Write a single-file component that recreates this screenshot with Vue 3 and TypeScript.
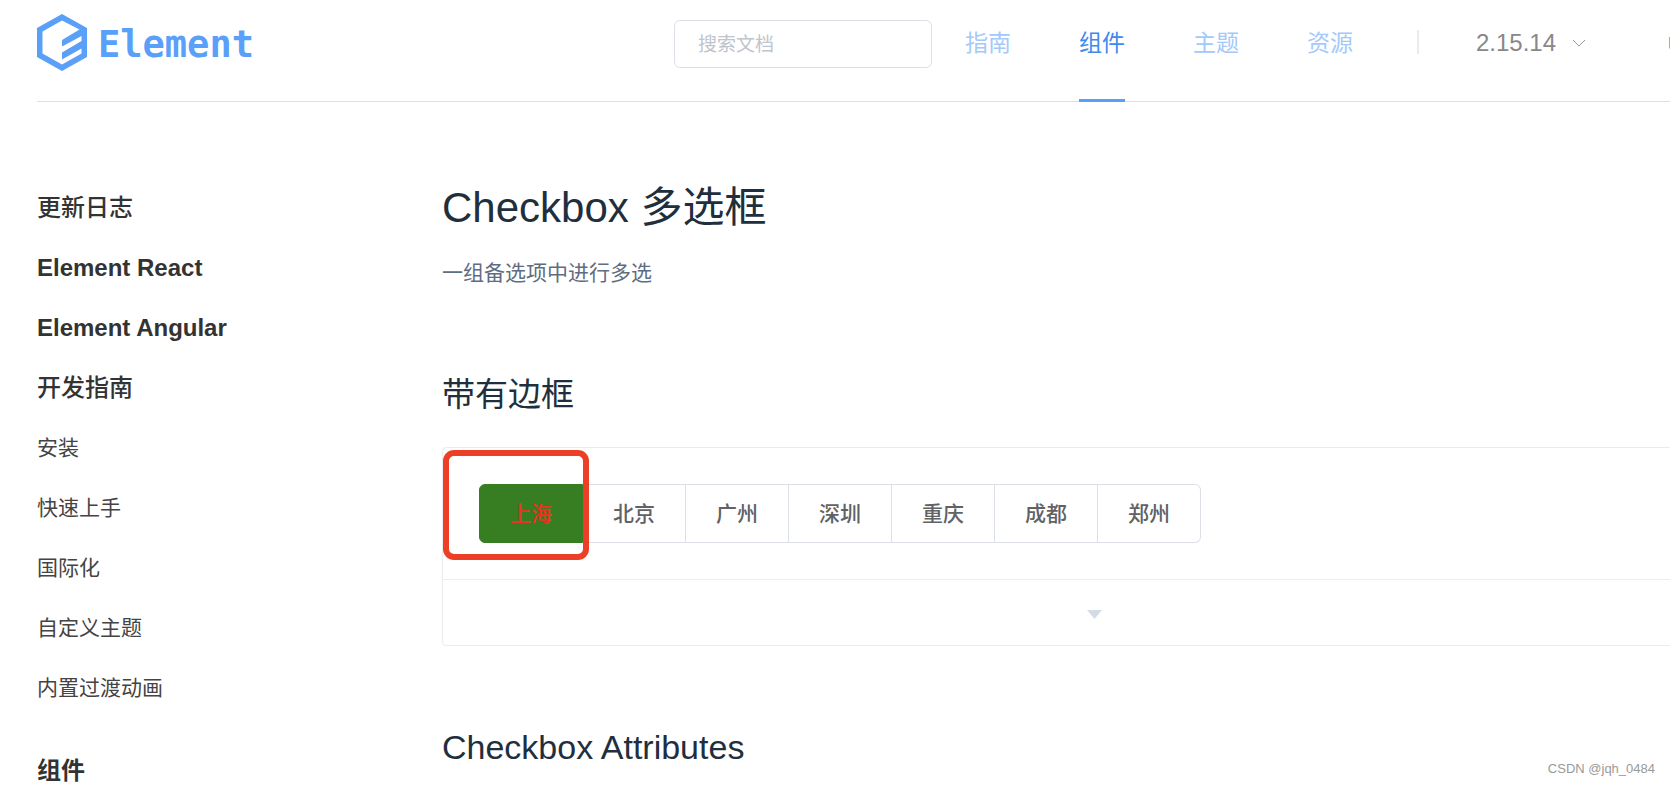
<script setup lang="ts">
import { ref } from 'vue'

interface NavItem {
  label: string
  active?: boolean
}

interface SideLink {
  label: string
  kind: 'heading' | 'heading latin' | 'section' | 'item'
}

const query = ref('')
const version = ref('2.15.14')
const selected = ref<string[]>(['上海'])

const navItems: NavItem[] = [
  { label: '指南' },
  { label: '组件', active: true },
  { label: '主题' },
  { label: '资源' },
]
const sideLinks: SideLink[] = [
  { label: '更新日志', kind: 'heading' },
  { label: 'Element React', kind: 'heading latin' },
  { label: 'Element Angular', kind: 'heading latin' },
  { label: '开发指南', kind: 'heading' },
  { label: '安装', kind: 'item' },
  { label: '快速上手', kind: 'item' },
  { label: '国际化', kind: 'item' },
  { label: '自定义主题', kind: 'item' },
  { label: '内置过渡动画', kind: 'item' },
  { label: '组件', kind: 'section' },
]
const cities: string[] = ['上海', '北京', '广州', '深圳', '重庆', '成都', '郑州']
</script>

<template>
  <div class="page">
    <header class="header">
      <a class="logo" href="#" aria-label="Element">
        <svg class="mark" viewBox="0 0 50 57" aria-hidden="true">
          <path
            fill-rule="evenodd"
            d="M25 0 50 14V43L25 57 0 43V14ZM25 6.500 5.500 17.500V39.500L25 50.500 44.500 39.500V34.500L25 45.500V38.500L44.500 27V22L25 32.500V26L42.500 15.500Z"
          />
        </svg>
        <span class="wordmark">Element</span>
      </a>
      <input v-model="query" class="search" type="text" placeholder="搜索文档" aria-label="搜索文档" />
      <nav class="nav">
        <a v-for="item in navItems" :key="item.label" href="#" :class="{ active: item.active }">{{ item.label }}</a>
      </nav>
      <span class="divider"></span>
      <button class="version" type="button">
        {{ version }}
        <svg viewBox="0 0 14 8" aria-hidden="true"><path d="M1 1 7 7 13 1" /></svg>
      </button>
      <button class="language" type="button">中文</button>
    </header>

    <div class="body">
      <aside class="sidebar">
        <a v-for="link in sideLinks" :key="link.label" :class="link.kind" href="#">{{ link.label }}</a>
      </aside>

      <main class="content">
        <h1>Checkbox 多选框</h1>
        <p>一组备选项中进行多选</p>
        <h2>带有边框</h2>
        <section class="demo">
          <div class="source">
            <div class="group">
              <label v-for="city in cities" :key="city" class="option">
                <input v-model="selected" type="checkbox" :value="city" />
                <span>{{ city }}</span>
              </label>
            </div>
          </div>
          <button class="expand" type="button" aria-label="显示代码">
            <svg viewBox="0 0 15 9" aria-hidden="true"><path d="M0 0H15L7.5 9Z" /></svg>
          </button>
          <div class="highlight"></div>
        </section>
        <h2 class="attributes">Checkbox Attributes</h2>
      </main>
    </div>
    <div class="credit">CSDN @jqh_0484</div>
  </div>
</template>

<style>
body {
  margin: 0;
  background: #fff;
}
</style>

<style scoped>
.page {
  position: relative;
  height: 100vh;
  overflow: hidden;
  box-sizing: border-box;
  padding-left: 37px;
  font-family: "Liberation Sans", "Noto Sans CJK SC", sans-serif;
  color: #333;
}
a {
  text-decoration: none;
  color: inherit;
}
button {
  border: 0;
  padding: 0;
  background: none;
  font: inherit;
  cursor: pointer;
}
.header {
  display: flex;
  align-items: center;
  height: 101px;
  border-bottom: 1px solid #dcdfe6;
}
.logo {
  display: flex;
  align-items: center;
  gap: 11px;
  height: 57px;
  margin-bottom: 17px;
  color: #5a9ff8;
}
.mark {
  width: 50px;
  height: 57px;
  fill: currentColor;
}
.wordmark {
  padding-top: 4px;
  font: bold 37px/57px "DejaVu Sans Mono", monospace;
}
.search {
  box-sizing: border-box;
  flex: none;
  width: 258px;
  height: 48px;
  margin: 0 33px 14px auto;
  padding: 2px 23px 0;
  border: 1px solid #dcdfe6;
  border-radius: 6px;
  background: #fff;
  font: 19px "Liberation Sans", "Noto Sans CJK SC", sans-serif;
  color: #606266;
}
.search::placeholder {
  color: #c0c4cc;
  opacity: 1;
}
.nav {
  display: flex;
  gap: 68px;
  align-self: stretch;
  font-size: 23px;
  line-height: 86px;
  color: #a3c9fb;
}
.nav a {
  flex: none;
  box-sizing: border-box;
  width: 46px;
  height: 102px;
  white-space: nowrap;
}
.nav .active {
  border-bottom: 3px solid #5a9ff8;
  color: #4089ef;
}
.divider {
  flex: none;
  width: 2px;
  height: 24px;
  margin: 0 57px 18px 64px;
  background: #ebebeb;
}
.version {
  display: flex;
  align-items: center;
  gap: 16px;
  height: 36px;
  margin-bottom: 16px;
  font-size: 24px;
  color: #888;
}
.version svg {
  width: 14px;
  height: 8px;
  fill: none;
  stroke: #999;
}
.language {
  flex: none;
  width: 48px;
  height: 36px;
  margin: 0 -45px 16px 81px;
  white-space: nowrap;
  font-size: 24px;
  color: #888;
}
.body {
  display: grid;
  grid-template-columns: 405px 1fr;
}
.sidebar {
  display: flex;
  flex-direction: column;
  padding-top: 76px;
  font-size: 21px;
  line-height: 60px;
  color: #444;
}
.heading,
.section {
  font-size: 24px;
  font-weight: 500;
  color: #333;
}
.latin,
.section {
  font-weight: 700;
}
.section {
  margin-top: 23px;
}
.content {
  min-width: 0;
  padding-top: 76px;
  color: #1f2f3d;
}
h1,
h2,
p {
  margin: 0;
  font-weight: 400;
}
h1 {
  font-size: 42px;
  line-height: 60px;
}
p {
  margin-top: 19px;
  font-size: 21px;
  line-height: 32px;
  color: #5e6d82;
}
h2 {
  margin-top: 81px;
  font-size: 33px;
  line-height: 50px;
}
.demo {
  position: relative;
  margin-top: 27px;
  margin-right: -76px;
  border: 1px solid #ebebeb;
  border-radius: 4px;
}
.source {
  padding: 36px;
}
.group {
  display: flex;
}
.option {
  position: relative;
  box-sizing: border-box;
  width: 103px;
  height: 59px;
  border: 1px solid #dcdfe6;
  border-left: 0;
  text-align: center;
  font-size: 21px;
  font-weight: 500;
  line-height: 57px;
  color: #606266;
  cursor: pointer;
}
.option:first-child {
  width: 104px;
  border-left: 1px solid #dcdfe6;
  border-radius: 6px 0 0 6px;
}
.option:last-child {
  border-radius: 0 6px 6px 0;
}
.option:has(input:checked) {
  border-color: #377d22;
  background: #377d22;
  color: #eb3323;
}
.option input {
  position: absolute;
  opacity: 0;
}
.expand {
  display: flex;
  align-items: center;
  justify-content: center;
  width: 100%;
  height: 66px;
  padding-top: 3px;
  border-top: 1px solid #eaeefb;
}
.expand svg {
  width: 15px;
  height: 9px;
  fill: #d3dce6;
}
.highlight {
  position: absolute;
  top: 2px;
  left: 0;
  box-sizing: border-box;
  width: 146px;
  height: 110px;
  border: 6px solid #ec3f25;
  border-radius: 11px;
  pointer-events: none;
}
.attributes {
  margin-top: 76px;
  font-size: 34px;
}
.credit {
  position: absolute;
  right: 15px;
  bottom: 8px;
  font-size: 13px;
  line-height: 18px;
  color: #999;
}
</style>
